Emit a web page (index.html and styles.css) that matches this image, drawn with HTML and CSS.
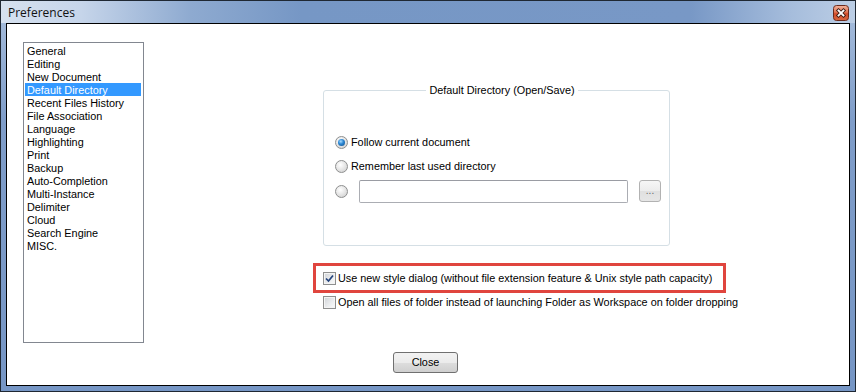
FILE: index.html
```html
<!DOCTYPE html>
<html lang="en">
<head>
    <meta charset="UTF-8">
    <title>Preferences</title>
    <link rel="stylesheet" href="styles.css">
</head>
<body>
    <div class="window">
        <div class="titlebar">
            <span class="title">Preferences</span>
            <span class="close-x">
                <svg width="16" height="16" viewBox="0 0 16 16">
                    <defs>
                        <linearGradient id="redg" x1="0" y1="0" x2="0" y2="1">
                            <stop offset="0" stop-color="#f3b49e"/>
                            <stop offset="0.45" stop-color="#e07352"/>
                            <stop offset="0.55" stop-color="#cf4a2a"/>
                            <stop offset="1" stop-color="#d8663f"/>
                        </linearGradient>
                    </defs>
                    <rect x="0.5" y="0.5" width="15" height="15" rx="3" fill="url(#redg)" stroke="#6b2a1c"/>
                    <path d="M5.5 5.5 L10.5 10.5 M10.5 5.5 L5.5 10.5" stroke="#3b1a12" stroke-width="3.6" stroke-linecap="square"/>
                    <path d="M5.5 5.5 L10.5 10.5 M10.5 5.5 L5.5 10.5" stroke="#fff" stroke-width="1.8" stroke-linecap="square"/>
                </svg>
            </span>
        </div>
        <div class="client">
            <div class="panes">
                <ul class="pagelist">
                    <li>General</li>
                    <li>Editing</li>
                    <li>New Document</li>
                    <li class="selected">Default Directory</li>
                    <li>Recent Files History</li>
                    <li>File Association</li>
                    <li>Language</li>
                    <li>Highlighting</li>
                    <li>Print</li>
                    <li>Backup</li>
                    <li>Auto-Completion</li>
                    <li>Multi-Instance</li>
                    <li>Delimiter</li>
                    <li>Cloud</li>
                    <li>Search Engine</li>
                    <li>MISC.</li>
                </ul>
                <div class="settings">
                    <fieldset class="group">
                        <legend>Default Directory (Open/Save)</legend>
                        <div class="option first">
                            <span class="radio checked"></span>
                            <span>Follow current document</span>
                        </div>
                        <div class="option second">
                            <span class="radio"></span>
                            <span>Remember last used directory</span>
                        </div>
                        <div class="option custom">
                            <span class="radio"></span>
                            <span class="pathbox"></span>
                            <span class="browse">...</span>
                        </div>
                    </fieldset>
                    <div class="highlight">
                        <div class="option">
                            <span class="check">
                                <svg width="11" height="11" viewBox="0 0 11 11">
                                    <path d="M2 5.5 L4.5 8 L9 2.5" fill="none" stroke="#24437c" stroke-width="1.7"/>
                                </svg>
                            </span>
                            <span>Use new style dialog (without file extension feature &amp; Unix style path capacity)</span>
                        </div>
                    </div>
                    <div class="option dropping">
                        <span class="check"></span>
                        <span>Open all files of folder instead of launching Folder as Workspace on folder dropping</span>
                    </div>
                </div>
            </div>
            <div class="footer">
                <span class="closebtn">Close</span>
            </div>
        </div>
    </div>
</body>
</html>
```

FILE: styles.css
```css
body {
    margin: 0;
    padding: 0;
    font-family: "Liberation Sans", Arial, sans-serif;
    font-size: 10.85px;
    color: #000;
}

.window {
    width: 856px;
    height: 392px;
    box-sizing: border-box;
    border: 1px solid #1f2833;
    background: linear-gradient(to bottom, #a9bfdd 0, #7f9dc9 120px, #7696c5 100%);
}

.titlebar {
    height: 22px;
    display: flex;
    justify-content: space-between;
    align-items: flex-start;
    padding: 4px 6px 0 7px;
    box-sizing: border-box;
    background: linear-gradient(to right, #d6e1ef 0, #c6d5ea 80px, #8eaad0 190px, #7697c5 300px, #7898c6 690px, #a6bddc 790px, #bccee5 100%);
}

.title {
    font-family: "Open Sans", "Noto Sans", sans-serif;
    font-size: 12px;
    line-height: 16px;
    color: #111;
}

.close-x {
    display: block;
    width: 16px;
    height: 16px;
}

.close-x svg {
    display: block;
}

.client {
    margin: 0 5px;
    height: 363px;
    box-sizing: border-box;
    border: 1px solid #000;
    background-color: #fff;
    display: flex;
    flex-direction: column;
    padding: 18px 0 0 16px;
}

.panes {
    display: flex;
    align-items: flex-start;
}

.pagelist {
    list-style: none;
    margin: 0;
    width: 121px;
    height: 301px;
    box-sizing: border-box;
    border: 1px solid #828790;
    padding: 1px 2px 1px 1px;
}

.pagelist li {
    height: 13px;
    line-height: 15px;
    overflow: hidden;
    padding-left: 2px;
    white-space: nowrap;
}

.pagelist li.selected {
    background-color: #3399ff;
    color: #fff;
}

.settings {
    margin-left: 179px;
    margin-top: 42px;
}

.group {
    width: 347px;
    height: 162px;
    box-sizing: border-box;
    margin: 0;
    padding: 39px 0 0 11px;
    border: 1px solid #d5dfe5;
    border-radius: 3px;
    min-width: 0;
}

.group legend {
    margin: 0 auto;
    padding: 0 3px;
    line-height: 13px;
    color: #000;
}

.option {
    display: flex;
    align-items: center;
    height: 13px;
    line-height: 13px;
    white-space: nowrap;
}

.option.second {
    margin-top: 11px;
}

.option.custom {
    margin-top: 7px;
    height: 23px;
    align-items: center;
}

.radio {
    width: 13px;
    height: 13px;
    box-sizing: border-box;
    border: 1px solid #8e8f8f;
    border-radius: 50%;
    background: radial-gradient(circle at 40% 35%, #ffffff 0, #e8e8e8 45%, #c9c9c9 100%);
    margin-right: 3px;
    display: flex;
    align-items: center;
    justify-content: center;
    flex-shrink: 0;
}

.radio.checked::after {
    content: "";
    width: 7px;
    height: 7px;
    border-radius: 50%;
    background: radial-gradient(circle at 40% 35%, #a9dcff 0, #2f8ad6 40%, #0b4a86 100%);
}

.pathbox {
    width: 269px;
    height: 23px;
    box-sizing: border-box;
    margin-left: 8px;
    border: 1px solid #abadb3;
    border-top-color: #9a9ca3;
    border-radius: 2px;
    background-color: #fff;
}

.browse {
    width: 22px;
    height: 22px;
    box-sizing: border-box;
    margin-left: 11px;
    margin-top: -2px;
    border: 1px solid #b2b2b2;
    border-radius: 3px;
    background: linear-gradient(to bottom, #f6f6f6 0, #ececec 50%, #e0e0e0 51%, #e6e6e6 100%);
    color: #666;
    text-align: center;
    line-height: 20px;
    font-size: 10px;
}

.highlight {
    width: 413px;
    box-sizing: border-box;
    margin: 17px 0 0 -10px;
    border: 3px solid #e0453e;
    padding: 6px 0 5px 7px;
}

.check {
    width: 13px;
    height: 13px;
    box-sizing: border-box;
    border: 1px solid #8e8f8f;
    background: linear-gradient(135deg, #cfd2d6 0, #eceef0 60%, #fbfbfb 100%);
    box-shadow: inset 0 0 0 1px #f4f4f4;
    margin-right: 2px;
    flex-shrink: 0;
    display: flex;
    align-items: center;
    justify-content: center;
}

.check svg {
    display: block;
}

.option.dropping {
    margin-top: 3px;
}

.footer {
    margin-top: 9px;
    padding-left: 370px;
}

.closebtn {
    display: block;
    width: 65px;
    height: 21px;
    box-sizing: border-box;
    border: 1px solid #707070;
    border-radius: 3px;
    background: linear-gradient(to bottom, #f2f2f2 0, #ebebeb 50%, #dddddd 51%, #cfcfcf 100%);
    text-align: center;
    line-height: 19px;
}
```
